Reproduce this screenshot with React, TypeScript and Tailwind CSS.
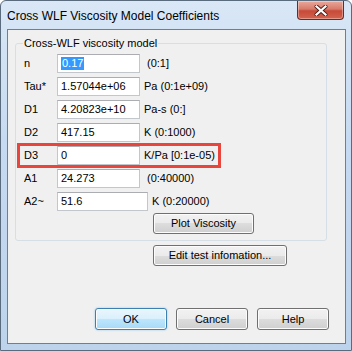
import React from 'react'

type Row = {
  label: string
  value: string
  unit: string
  selected?: boolean
  inputW: string
  unitGap: string
}

const ROWS: Row[] = [
  { label: 'n',    value: '0.17',        unit: '(0:1]',          selected: true, inputW: 'w-[83px]', unitGap: 'ml-[7px]' },
  { label: 'Tau*', value: '1.57044e+06', unit: 'Pa (0:1e+09)',   inputW: 'w-[83px]', unitGap: 'ml-[4px]' },
  { label: 'D1',   value: '4.20823e+10', unit: 'Pa-s (0:]',      inputW: 'w-[83px]', unitGap: 'ml-[4px]' },
  { label: 'D2',   value: '417.15',      unit: 'K (0:1000)',     inputW: 'w-[83px]', unitGap: 'ml-[4px]' },
  { label: 'D3',   value: '0',           unit: 'K/Pa [0:1e-05)', inputW: 'w-[83px]', unitGap: 'ml-[4px]' },
  { label: 'A1',   value: '24.273',      unit: '(0:40000)',      inputW: 'w-[83px]', unitGap: 'ml-[7px]' },
  { label: 'A2~',  value: '51.6',        unit: 'K (0:20000)',    inputW: 'w-[91px]', unitGap: 'ml-[4px]' },
]

const btn =
  'flex items-center justify-center rounded-[3px] border border-[#707070] bg-[linear-gradient(#f2f2f2_0%,#ebebeb_50%,#dddddd_50%,#cfcfcf_100%)] shadow-[inset_0_0_0_1px_#fcfcfc] text-black'

function CloseButton() {
  return (
    <div className="mr-[7px] flex h-[19px] w-[47px] items-center justify-center self-start rounded-b-[4px] border border-t-0 border-[#6d2a22] bg-[linear-gradient(#e9a99b_0%,#d87a6a_45%,#c74a38_55%,#d4634f_100%)] shadow-[inset_0_0_0_1px_rgba(255,255,255,0.35)]">
      <svg width="14" height="11" viewBox="0 0 14 11">
        <path d="M2.5 1.5 L11.5 9.5 M11.5 1.5 L2.5 9.5" stroke="#4a1f1a" strokeWidth="4" strokeLinecap="round" />
        <path d="M2.5 1.5 L11.5 9.5 M11.5 1.5 L2.5 9.5" stroke="#ffffff" strokeWidth="2.2" strokeLinecap="square" />
      </svg>
    </div>
  )
}

export default function App() {
  return (
    <div className="relative h-[351px] w-[352px] overflow-hidden rounded-t-[6px] border border-[#5a6b7e] bg-[linear-gradient(#d9e7f6_0%,#c6daf1_40%,#bdd3ec_100%)] font-['Liberation_Sans',Arial,sans-serif] text-[11px] text-black">
      {/* title bar */}
      <div className="flex h-[28px] items-center">
        <span className="ml-[6px] mt-[2px] text-[12px] leading-none">Cross WLF Viscosity Model Coefficients</span>
        <div className="ml-auto self-start">
          <CloseButton />
        </div>
      </div>

      {/* client area */}
      <div className="ml-[6px] flex h-[315px] w-[339px] flex-col border border-[#6f7f92] bg-[#f0f0f0]">
        <div className="relative ml-[7px] mt-[13px] h-[198px] w-[312px] rounded-[3px] border border-[#d5dfe5]">
          <span className="absolute -top-[8px] left-[7px] bg-[#f0f0f0] px-[1px] leading-[14px]">
            Cross-WLF viscosity model
          </span>
          <div className="flex flex-col gap-[4px] pl-[8px] pt-[10px]">
            {ROWS.map(row => (
              <div key={row.label} className="flex h-[19px] items-center">
                <span className="w-[33px]">{row.label}</span>
                <div
                  className={`flex h-[19px] items-center border border-[#c2c6cd] border-t-[#abadb3] bg-white pl-[3px] ${row.inputW}`}
                >
                  {row.selected ? (
                    <span className="bg-[#3399ff] px-[1px] leading-[13px] text-white">{row.value}</span>
                  ) : (
                    <span className="leading-[13px]">{row.value}</span>
                  )}
                </div>
                <span className={row.unitGap}>{row.unit}</span>
              </div>
            ))}
          </div>
          <div className={`ml-[137px] mt-[2px] h-[21px] w-[101px] ${btn}`}>Plot Viscosity</div>
        </div>

        <div className={`ml-[145px] mt-[4px] h-[21px] w-[134px] ${btn}`}>Edit test infomation...</div>

        <div className="mt-auto flex justify-end gap-[9px] pb-[13px] pr-[16px]">
          <div className="flex h-[22px] w-[72px] items-center justify-center rounded-[3px] border border-[#3c7fb1] bg-[linear-gradient(#eaf6fd_0%,#d9f0fc_50%,#bee6fd_50%,#a7d9f5_100%)] shadow-[inset_0_0_0_1px_#fcfcfc,0_0_2px_#7ec4ee]">
            OK
          </div>
          <div className={`h-[22px] w-[72px] ${btn}`}>Cancel</div>
          <div className={`h-[22px] w-[72px] ${btn}`}>Help</div>
        </div>
      </div>

      {/* red highlight annotation */}
      <div className="absolute left-[16px] top-[142px] h-[25px] w-[204px] border-[3px] border-[#e8453c]" />
    </div>
  )
}
